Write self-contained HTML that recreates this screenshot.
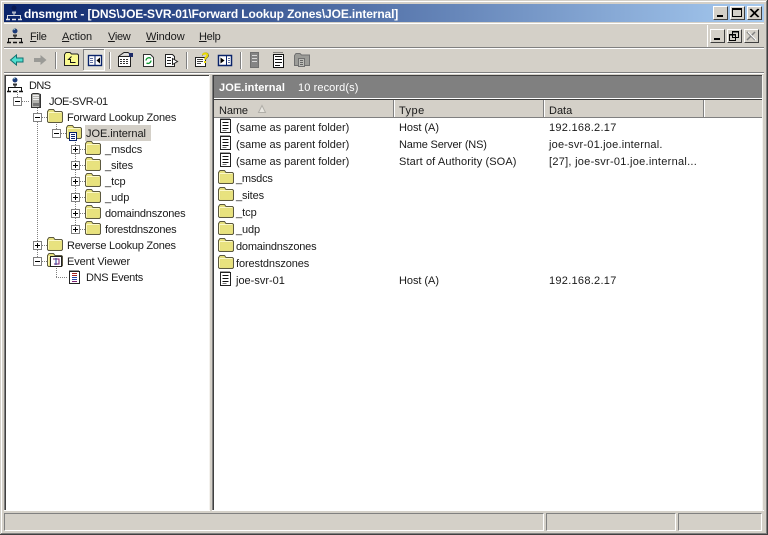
<!DOCTYPE html>
<html><head><meta charset="utf-8">
<style>
html,body{margin:0;padding:0;width:768px;height:535px;overflow:hidden;background:#d4d0c8}
body{position:relative;font:11px/13px "Liberation Sans",sans-serif;color:#1a1a1a}
.a{position:absolute}
.t{position:absolute;white-space:nowrap}
svg{position:absolute;overflow:visible}
.vd{position:absolute;width:1px;background:repeating-linear-gradient(#808080 0 1px,transparent 1px 2px)}
.hd{position:absolute;height:1px;background:repeating-linear-gradient(90deg,#808080 0 1px,transparent 1px 2px)}
.bx{position:absolute;width:7px;height:7px;border:1px solid #808080;background:#fff}
.bx:before{content:"";position:absolute;left:1px;top:3px;width:5px;height:1px;background:#000}
.bx.p:after{content:"";position:absolute;left:3px;top:1px;width:1px;height:5px;background:#000}
.btn{position:absolute;width:13px;height:12px;background:#d4d0c8;border:1px solid;border-color:#fff #404040 #404040 #fff}
.u{text-decoration:underline}
</style></head><body>
<svg width="0" height="0" style="position:absolute">
<defs>
<symbol id="fo" viewBox="0 0 16 14"><path d="M.5 2.500 2 .5H6.500L8 2.500H14.500L15.500 3.500V12.500L14.500 13.500H1.500L.5 12.500Z" fill="#e6e07e" stroke="#5c5940"/><path d="M1.500 3.500H14.500" stroke="#fbf8c8"/><path d="M1.500 3.500V12.500" stroke="#fdf8b8"/><path d="M3 5H14V12H3Z" fill="#e8e27e"/></symbol>
<symbol id="doc" viewBox="0 0 14 16"><path d="M2.500 2.500H12.500V15.500H2.500Z" fill="#fff" stroke="#222"/><path d="M2.500 1.500H12.500" stroke="#444" stroke-dasharray="1 1"/><path d="M4.500 5.500H10.500M4.500 8.500H10.500M4.500 11.500H10.500" stroke="#111"/><path d="M4.500 13.500H8.500" stroke="#777"/></symbol>
<symbol id="net" viewBox="0 0 16 16"><circle cx="8" cy="3" r="2.500" fill="#1c3a78"/><path d="M6.500 2 8 1" stroke="#9cc"/><path d="M6 6.500H10V8.500H6Z" fill="#333"/><path d="M8 8V10.500M1.500 14V10.500H14.500V14" fill="none" stroke="#111"/><path d="M0 14.500H4M12 14.500H16M6 14.500H10" stroke="#111" stroke-width="1.500"/></symbol>
</defs>
</svg>

<!-- window frame -->
<div class="a" style="left:0;top:0;width:768px;height:1px;background:#d4d0c8"></div>
<div class="a" style="left:1px;top:1px;width:766px;height:1px;background:#fff"></div>
<div class="a" style="left:1px;top:1px;width:1px;height:533px;background:#fff"></div>
<div class="a" style="left:767px;top:0;width:1px;height:535px;background:#404040"></div>
<div class="a" style="left:766px;top:1px;width:1px;height:533px;background:#808080"></div>
<div class="a" style="left:0;top:534px;width:768px;height:1px;background:#404040"></div>
<div class="a" style="left:1px;top:533px;width:766px;height:1px;background:#808080"></div>

<!-- title bar -->
<div class="a" style="left:4px;top:4px;width:760px;height:18px;background:linear-gradient(90deg,#0a246a,#a6caf0)"></div>
<svg style="left:6px;top:5px" width="16" height="16"><circle cx="8" cy="3" r="2.500" fill="#0a1a50"/><path d="M6 6.500H10V8.500H6Z" fill="#b0b8c8"/><path d="M8 8V10.500M1.500 14V10.500H14.500V14" fill="none" stroke="#d8dce4"/><path d="M0 14.500H4M12 14.500H16M6 14.500H10" stroke="#e4e6ea" stroke-width="1.500"/></svg>
<div class="t" style="left:24px;top:7px;color:#fff;font:bold 12px/14px 'Liberation Sans',sans-serif;letter-spacing:-.12px">dnsmgmt - [DNS\JOE-SVR-01\Forward Lookup Zones\JOE.internal]</div>
<div class="btn" style="left:713px;top:6px"><div class="a" style="left:3px;top:8px;width:6px;height:2px;background:#000"></div></div>
<div class="btn" style="left:730px;top:6px"><div class="a" style="left:1px;top:1px;width:8px;height:6px;border:1px solid #000;border-top-width:2px"></div></div>
<div class="btn" style="left:747px;top:6px"><svg style="left:2px;top:2px" width="9" height="8"><path d="M0 0 8 8M1 0 9 8M8 0 0 8M9 0 1 8" stroke="#000"/></svg></div>

<!-- menu bar -->
<div class="a" style="left:4px;top:23px;width:760px;height:1px;background:#fff"></div>
<div class="a" style="left:4px;top:47px;width:760px;height:1px;background:#808080"></div>
<div class="a" style="left:4px;top:48px;width:760px;height:1px;background:#fff"></div>
<svg style="left:7px;top:27px" width="16" height="18"><use href="#net"/></svg>
<div class="t" style="left:30px;top:31px;letter-spacing:-.3px"><span class="u">F</span>ile</div>
<div class="t" style="left:62px;top:31px;letter-spacing:-.1px"><span class="u">A</span>ction</div>
<div class="t" style="left:108px;top:31px;letter-spacing:-.3px"><span class="u">V</span>iew</div>
<div class="t" style="left:146px;top:31px;letter-spacing:-.1px"><span class="u">W</span>indow</div>
<div class="t" style="left:199px;top:31px;letter-spacing:-.3px"><span class="u">H</span>elp</div>
<div class="a" style="left:707px;top:25px;width:1px;height:22px;background:#fff"></div>
<div class="btn" style="left:710px;top:29px"><div class="a" style="left:3px;top:8px;width:6px;height:2px;background:#000"></div></div>
<div class="btn" style="left:727px;top:29px"><svg style="left:1px;top:1px" width="10" height="10"><path d="M3.500 .5H9.500V6.500H3.500ZM.5 3.500H6.500V9.500H.5Z" fill="#d4d0c8" stroke="#000"/><path d="M3 1H10M0 4H7" stroke="#000"/></svg></div>
<div class="btn" style="left:744px;top:29px"><svg style="left:2px;top:2px" width="9" height="8"><path d="M0 0 8 8M8 0 0 8" stroke="#808080" stroke-width="1.500"/><path d="M1 0 9 8" stroke="#fff"/></svg></div>

<!-- toolbar -->
<svg style="left:0;top:49px" width="330" height="24">
<path d="M10.500 11 16.500 6V9H23V13H16.500V16Z" fill="#4fe0d0" stroke="#107070"/>
<path d="M46.500 11 40.500 6V9H34V13H40.500V16Z" fill="#9a9a96"/>
<path d="M55.500 3V20" stroke="#808080"/><path d="M56.500 3V20" stroke="#fff"/>
<path d="M64.500 5.500 66 3.500H70L71.500 5H77.500L78.500 6V16.500H64.500Z" fill="#fafa90" stroke="#222"/>
<path d="M71.500 7.500 68.500 10.500H70.500V13.500H75.500" fill="none" stroke="#111"/>
<rect x="84" y="1" width="20" height="20" fill="#e4e2da"/>
<path d="M83.500 21V.5H104" fill="none" stroke="#808080"/>
<path d="M83.500 21.500H104.500V.5" fill="none" stroke="#fff"/>
<rect x="88.500" y="6.500" width="13" height="10" fill="#fff" stroke="#0a246a" stroke-width="1.400"/>
<path d="M90 9.500H93M90 11.500H93M90 13.500H93" stroke="#6070a0"/>
<path d="M95 6V17" stroke="#0a246a"/><path d="M100 8.500V14.500L96.500 11.500Z" fill="#000"/>
<path d="M109.500 3V20" stroke="#808080"/><path d="M110.500 3V20" stroke="#fff"/>
<path d="M118.500 7.500H130.500V17.500H118.500Z" fill="#fff" stroke="#222"/><path d="M119 7 124 3.500H128L131 5.500" fill="#ddd" stroke="#222"/><path d="M120 10.500H129M120 12.500H129M120 14.500H129" stroke="#333" stroke-dasharray="2 1"/><path d="M129 4H133V8H129Z" fill="#1c2a68"/>
<path d="M143.500 5.500H150.500L153.500 8.500V17.500H143.500Z" fill="#fff" stroke="#333"/><path d="M146 11.500A3 3 0 0 1 151 9.500M151 11.500A3 3 0 0 1 146.500 14" fill="none" stroke="#119933" stroke-width="1.300"/>
<path d="M165.500 5.500H172.500L174.500 7.500V17.500H165.500Z" fill="#fff" stroke="#222"/><path d="M167 8.500H171M167 11.500H171M167 14.500H171" stroke="#222"/><path d="M172.500 9.500 177.500 12.500 172.500 15.500Z" fill="#fff" stroke="#222"/>
<path d="M186.500 3V20" stroke="#808080"/><path d="M187.500 3V20" stroke="#fff"/>
<path d="M195.500 8.500H205.500V17.500H195.500Z" fill="#fff" stroke="#222"/><path d="M197 10.500H203M197 12.500H203M197 14.500H201" stroke="#444"/>
<path d="M202.500 6.500C202.500 3 208.500 3 208.500 6.500C208.500 8.500 205.500 8.500 205.500 11" fill="none" stroke="#444" stroke-width="1"/><path d="M203 6C203 4 207.500 4 207.500 6C207.500 8 205 8 205 10.500M205 12V14" fill="none" stroke="#e8d800" stroke-width="2"/>
<rect x="218.500" y="6.500" width="13" height="10" fill="#fff" stroke="#0a246a" stroke-width="1.500"/><path d="M226.500 6V17" stroke="#0a246a"/><path d="M228 9.500H230M228 11.500H230M228 13.500H230" stroke="#6070a0"/><path d="M220.500 8.500V14.500L224.500 11.500Z" fill="#000"/>
<path d="M240.500 3V20" stroke="#808080"/><path d="M241.500 3V20" stroke="#fff"/>
<path d="M250.500 3.500H258.500V18.500H250.500Z" fill="#848484" stroke="#707070"/><path d="M252 6.500H257M252 9.500H257M252 12.500H257" stroke="#d8d8d8"/>
<path d="M273.500 5.500H283.500V18.500H273.500Z" fill="#fff" stroke="#111"/><path d="M273.500 3.500H283.500" stroke="#333" stroke-dasharray="1 1"/><path d="M275 7.500H282M275 10.500H282M275 13.500H282M275 16.500H280" stroke="#111"/>
<path d="M294.500 6.500 296 4.500H300L301.500 6H309.500V16.500H294.500Z" fill="#9c9c98" stroke="#707070"/><path d="M298.500 9.500H304.500V17.500H298.500Z" fill="#bdbdb8" stroke="#707070"/><path d="M300 11.500H303M300 13.500H303M300 15.500H303" stroke="#666"/>
</svg>
<div class="a" style="left:4px;top:72px;width:760px;height:1px;background:#808080"></div>
<div class="a" style="left:4px;top:73px;width:760px;height:1px;background:#fff"></div>

<!-- left pane -->
<div class="a" style="left:5px;top:75px;width:204px;height:435px;background:#fff;box-shadow:inset 1px 1px 0 #404040"></div>
<div class="a" style="left:209px;top:75px;width:1px;height:436px;background:#f4f2ee"></div>
<div class="a" style="left:4px;top:75px;width:1px;height:436px;background:#808080"></div>
<div class="a" style="left:4px;top:510px;width:206px;height:1px;background:#fff"></div>

<!-- tree lines -->
<div class="vd" style="left:17px;top:90px;height:8px"></div>
<div class="vd" style="left:37px;top:106px;height:151px"></div>
<div class="vd" style="left:56px;top:122px;height:7px"></div>
<div class="vd" style="left:75px;top:138px;height:87px"></div>
<div class="vd" style="left:56px;top:266px;height:11px"></div>
<div class="hd" style="left:22px;top:101px;width:8px"></div>
<div class="hd" style="left:42px;top:117px;width:5px"></div>
<div class="hd" style="left:61px;top:133px;width:5px"></div>
<div class="hd" style="left:80px;top:149px;width:5px"></div>
<div class="hd" style="left:80px;top:165px;width:5px"></div>
<div class="hd" style="left:80px;top:181px;width:5px"></div>
<div class="hd" style="left:80px;top:197px;width:5px"></div>
<div class="hd" style="left:80px;top:213px;width:5px"></div>
<div class="hd" style="left:80px;top:229px;width:5px"></div>
<div class="hd" style="left:42px;top:245px;width:5px"></div>
<div class="hd" style="left:42px;top:261px;width:5px"></div>
<div class="hd" style="left:56px;top:277px;width:11px"></div>

<div class="bx" style="left:13px;top:97px"></div>
<div class="bx" style="left:33px;top:113px"></div>
<div class="bx" style="left:52px;top:129px"></div>
<div class="bx p" style="left:71px;top:145px"></div>
<div class="bx p" style="left:71px;top:161px"></div>
<div class="bx p" style="left:71px;top:177px"></div>
<div class="bx p" style="left:71px;top:193px"></div>
<div class="bx p" style="left:71px;top:209px"></div>
<div class="bx p" style="left:71px;top:225px"></div>
<div class="bx p" style="left:33px;top:241px"></div>
<div class="bx" style="left:33px;top:257px"></div>

<!-- tree icons -->
<svg style="left:7px;top:77px" width="16" height="16"><use href="#net"/></svg>
<svg style="left:30px;top:93px" width="12" height="16"><path d="M1.500 1.500 3 .5H8L10.500 1.500V14.500H1.500Z" fill="#b4b4b0" stroke="#333"/><path d="M3 2.500H9M3 4.500H9M3 6.500H9" stroke="#eee"/><path d="M3 10H9V13H3Z" fill="#777"/><path d="M9.500 2V14" stroke="#666"/></svg>
<svg style="left:47px;top:109px" width="16" height="14"><use href="#fo"/></svg>
<svg style="left:66px;top:125px" width="16" height="14"><use href="#fo"/></svg>
<svg style="left:69px;top:132px" width="9" height="10"><path d="M.5 .5H7.500V8.500H.5Z" fill="#fff" stroke="#0a246a"/><path d="M2 2.500H6M2 4.500H6M2 6.500H6" stroke="#0a246a"/></svg>
<svg style="left:85px;top:141px" width="16" height="14"><use href="#fo"/></svg>
<svg style="left:85px;top:157px" width="16" height="14"><use href="#fo"/></svg>
<svg style="left:85px;top:173px" width="16" height="14"><use href="#fo"/></svg>
<svg style="left:85px;top:189px" width="16" height="14"><use href="#fo"/></svg>
<svg style="left:85px;top:205px" width="16" height="14"><use href="#fo"/></svg>
<svg style="left:85px;top:221px" width="16" height="14"><use href="#fo"/></svg>
<svg style="left:47px;top:237px" width="16" height="14"><use href="#fo"/></svg>
<svg style="left:47px;top:253px" width="16" height="14"><use href="#fo"/></svg>
<svg style="left:50px;top:256px" width="12" height="11"><path d="M.5 .5H11.500V10.500H.5Z" fill="#fff" stroke="#222"/><path d="M3 3H9V8H4" fill="none" stroke="#7a1c70"/><path d="M6 2V9" stroke="#2040a0"/></svg>
<svg style="left:68px;top:270px" width="14" height="16"><path d="M1.500 1.500H11.500V13.500H1.500Z" fill="#fff" stroke="#222"/><path d="M1.500 .5H11.500" stroke="#333" stroke-dasharray="1 1"/><path d="M4 3.500H9M4 5.500H9" stroke="#a02020"/><path d="M4 7.500H9M4 9.500H9" stroke="#2040a0"/><path d="M4 11.500H9" stroke="#7a1c70"/></svg>

<!-- tree text -->
<div class="a" style="left:85px;top:125px;width:66px;height:16px;background:#d4d0c8"></div>
<div class="t" style="left:29px;top:80px;letter-spacing:-.6px">DNS</div>
<div class="t" style="left:49px;top:96px;letter-spacing:-.5px">JOE-SVR-01</div>
<div class="t" style="left:67px;top:112px;letter-spacing:-.2px">Forward Lookup Zones</div>
<div class="t" style="left:86px;top:128px;letter-spacing:-.05px">JOE.internal</div>
<div class="t" style="left:105px;top:144px;letter-spacing:-.13px">_msdcs</div>
<div class="t" style="left:105px;top:160px;letter-spacing:-.13px">_sites</div>
<div class="t" style="left:105px;top:176px;letter-spacing:-.05px">_tcp</div>
<div class="t" style="left:105px;top:192px;letter-spacing:-.05px">_udp</div>
<div class="t" style="left:105px;top:208px;letter-spacing:-.2px">domaindnszones</div>
<div class="t" style="left:105px;top:224px;letter-spacing:-.23px">forestdnszones</div>
<div class="t" style="left:67px;top:240px;letter-spacing:-.25px">Reverse Lookup Zones</div>
<div class="t" style="left:67px;top:256px;letter-spacing:-.13px">Event Viewer</div>
<div class="t" style="left:86px;top:272px;letter-spacing:-.3px">DNS Events</div>

<!-- right pane -->
<div class="a" style="left:212px;top:75px;width:1px;height:436px;background:#808080"></div>
<div class="a" style="left:213px;top:75px;width:549px;height:435px;background:#fff;box-shadow:inset 1px 1px 0 #404040"></div>
<div class="a" style="left:212px;top:510px;width:552px;height:1px;background:#fff"></div>
<div class="a" style="left:762px;top:75px;width:1px;height:436px;background:#f4f2ee"></div>
<div class="a" style="left:214px;top:76px;width:548px;height:22px;background:#808080"></div>
<div class="t" style="left:219px;top:82px;color:#fff;font-weight:bold;letter-spacing:.1px">JOE.internal</div>
<div class="t" style="left:298px;top:82px;color:#fff;letter-spacing:.1px">10 record(s)</div>
<div class="a" style="left:214px;top:98px;width:548px;height:1px;background:#fff"></div>
<div class="a" style="left:214px;top:99px;width:548px;height:1px;background:#404040"></div>
<div class="a" style="left:214px;top:100px;width:548px;height:17px;background:#d4d0c8"></div>
<div class="a" style="left:214px;top:117px;width:548px;height:1px;background:#808080"></div>
<div class="a" style="left:393px;top:100px;width:1px;height:17px;background:#808080"></div>
<div class="a" style="left:394px;top:100px;width:1px;height:17px;background:#fff"></div>
<div class="a" style="left:543px;top:100px;width:1px;height:17px;background:#808080"></div>
<div class="a" style="left:544px;top:100px;width:1px;height:17px;background:#fff"></div>
<div class="a" style="left:703px;top:100px;width:1px;height:17px;background:#808080"></div>
<div class="a" style="left:704px;top:100px;width:1px;height:17px;background:#fff"></div>
<div class="t" style="left:219px;top:105px;letter-spacing:-.1px">Name</div>
<svg style="left:258px;top:105px" width="9" height="8"><path d="M4 .5 .5 7.500H7.500Z" fill="#e8e6e0" stroke="#b0aea8"/></svg>
<div class="t" style="left:399px;top:105px;letter-spacing:.45px">Type</div>
<div class="t" style="left:549px;top:105px">Data</div>

<svg style="left:218px;top:117px" width="14" height="16"><use href="#doc"/></svg>
<svg style="left:218px;top:134px" width="14" height="16"><use href="#doc"/></svg>
<svg style="left:218px;top:151px" width="14" height="16"><use href="#doc"/></svg>
<svg style="left:218px;top:170px" width="16" height="14"><use href="#fo"/></svg>
<svg style="left:218px;top:187px" width="16" height="14"><use href="#fo"/></svg>
<svg style="left:218px;top:204px" width="16" height="14"><use href="#fo"/></svg>
<svg style="left:218px;top:221px" width="16" height="14"><use href="#fo"/></svg>
<svg style="left:218px;top:238px" width="16" height="14"><use href="#fo"/></svg>
<svg style="left:218px;top:255px" width="16" height="14"><use href="#fo"/></svg>
<svg style="left:218px;top:270px" width="14" height="16"><use href="#doc"/></svg>

<div class="t" style="left:236px;top:122px;letter-spacing:-.02px">(same as parent folder)</div>
<div class="t" style="left:236px;top:139px;letter-spacing:-.02px">(same as parent folder)</div>
<div class="t" style="left:236px;top:156px;letter-spacing:-.02px">(same as parent folder)</div>
<div class="t" style="left:236px;top:173px;letter-spacing:-.2px">_msdcs</div>
<div class="t" style="left:236px;top:190px;letter-spacing:-.13px">_sites</div>
<div class="t" style="left:236px;top:207px">_tcp</div>
<div class="t" style="left:236px;top:224px;letter-spacing:-.1px">_udp</div>
<div class="t" style="left:236px;top:241px;letter-spacing:-.2px">domaindnszones</div>
<div class="t" style="left:236px;top:258px;letter-spacing:-.1px">forestdnszones</div>
<div class="t" style="left:236px;top:275px">joe-svr-01</div>
<div class="t" style="left:399px;top:122px;letter-spacing:-.05px">Host (A)</div>
<div class="t" style="left:399px;top:139px;letter-spacing:-.17px">Name Server (NS)</div>
<div class="t" style="left:399px;top:156px;letter-spacing:.11px">Start of Authority (SOA)</div>
<div class="t" style="left:399px;top:275px;letter-spacing:-.05px">Host (A)</div>
<div class="t" style="left:549px;top:122px;letter-spacing:.28px">192.168.2.17</div>
<div class="t" style="left:549px;top:139px;letter-spacing:.2px">joe-svr-01.joe.internal.</div>
<div class="t" style="left:549px;top:156px;letter-spacing:.27px">[27], joe-svr-01.joe.internal...</div>
<div class="t" style="left:549px;top:275px;letter-spacing:.28px">192.168.2.17</div>

<!-- status bar -->
<div class="a" style="left:4px;top:513px;width:538px;height:16px;border:1px solid;border-color:#808080 #fff #fff #808080"></div>
<div class="a" style="left:546px;top:513px;width:128px;height:16px;border:1px solid;border-color:#808080 #fff #fff #808080"></div>
<div class="a" style="left:678px;top:513px;width:82px;height:16px;border:1px solid;border-color:#808080 #fff #fff #808080"></div>
</body></html>
